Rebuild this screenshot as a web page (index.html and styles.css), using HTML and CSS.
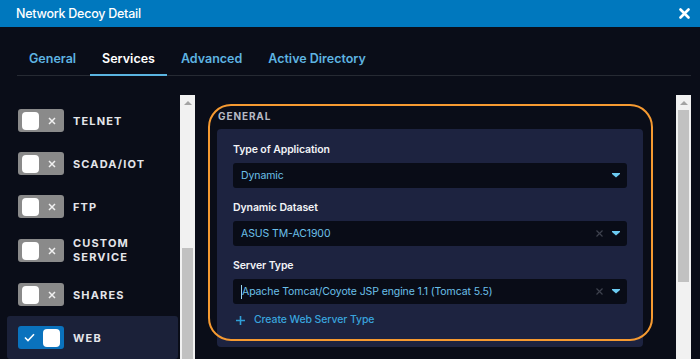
FILE: index.html
```html
<!DOCTYPE html>
<html lang="en">
  <head>
    <meta charset="UTF-8" />
    <meta name="viewport" content="width=device-width, initial-scale=1.0" />
    <title>Network Decoy Detail</title>
    <link rel="stylesheet" href="styles.css">
  </head>
  <body>
    <div id="dialog">
      <div id="titlebar">
        <span class="title">Network Decoy Detail</span>
        <span class="close">
          <svg width="11" height="11" viewBox="0 0 11 11"><path d="M1.5 1.5 L9.5 9.5 M9.5 1.5 L1.5 9.5" stroke="#fff" stroke-width="2.6" stroke-linecap="round"/></svg>
        </span>
      </div>

      <div id="tabs">
        <div class="tab">General</div>
        <div class="tab active">Services</div>
        <div class="tab">Advanced</div>
        <div class="tab">Active Directory</div>
      </div>

      <div id="content">
        <div id="services">
          <div class="service">
            <div class="toggle"><span class="knob"></span><svg class="mark" width="8" height="8" viewBox="0 0 8 8"><path d="M1 1 L7 7 M7 1 L1 7" stroke="#f0f0f0" stroke-width="1.5"/></svg></div>
            <div class="label">TELNET</div>
          </div>
          <div class="service">
            <div class="toggle"><span class="knob"></span><svg class="mark" width="8" height="8" viewBox="0 0 8 8"><path d="M1 1 L7 7 M7 1 L1 7" stroke="#f0f0f0" stroke-width="1.5"/></svg></div>
            <div class="label">SCADA/IOT</div>
          </div>
          <div class="service">
            <div class="toggle"><span class="knob"></span><svg class="mark" width="8" height="8" viewBox="0 0 8 8"><path d="M1 1 L7 7 M7 1 L1 7" stroke="#f0f0f0" stroke-width="1.5"/></svg></div>
            <div class="label">FTP</div>
          </div>
          <div class="service">
            <div class="toggle"><span class="knob"></span><svg class="mark" width="8" height="8" viewBox="0 0 8 8"><path d="M1 1 L7 7 M7 1 L1 7" stroke="#f0f0f0" stroke-width="1.5"/></svg></div>
            <div class="label two-line">CUSTOM<br>SERVICE</div>
          </div>
          <div class="service">
            <div class="toggle"><span class="knob"></span><svg class="mark" width="8" height="8" viewBox="0 0 8 8"><path d="M1 1 L7 7 M7 1 L1 7" stroke="#f0f0f0" stroke-width="1.5"/></svg></div>
            <div class="label">SHARES</div>
          </div>
          <div class="service selected">
            <div class="toggle on">
              <svg class="check" width="11" height="9" viewBox="0 0 11 9"><path d="M1 4.5 L4 7.5 L10 1.2" fill="none" stroke="#fff" stroke-width="1.6"/></svg>
              <span class="knob"></span>
            </div>
            <div class="label">WEB</div>
          </div>
        </div>

        <div class="scrollbar">
          <div class="arrow"></div>
          <div class="track" style="height: 138px"></div>
          <div class="thumb"></div>
        </div>

        <div id="detail">
          <div class="section-title">GENERAL</div>
          <div class="card">
            <div class="field-label">Type of Application</div>
            <div class="select">
              <span class="value">Dynamic</span>
              <svg class="caret" width="8" height="5" viewBox="0 0 8 5"><path d="M0 0 H8 V1 L4 4.5 L0 1 Z" fill="#6ccbf2"/></svg>
            </div>

            <div class="field-label">Dynamic Dataset</div>
            <div class="select">
              <span class="value">ASUS TM-AC1900</span>
              <svg class="clear" width="7" height="7" viewBox="0 0 7 7"><path d="M0.5 0.5 L6.5 6.5 M6.5 0.5 L0.5 6.5" stroke="#3d414d" stroke-width="1.2"/></svg>
              <svg class="caret" width="8" height="5" viewBox="0 0 8 5"><path d="M0 0 H8 V1 L4 4.5 L0 1 Z" fill="#6ccbf2"/></svg>
            </div>

            <div class="field-label">Server Type</div>
            <div class="select">
              <span class="value"><span class="cursor"></span>Apache Tomcat/Coyote JSP engine 1.1 (Tomcat 5.5)</span>
              <svg class="clear" width="7" height="7" viewBox="0 0 7 7"><path d="M0.5 0.5 L6.5 6.5 M6.5 0.5 L0.5 6.5" stroke="#3d414d" stroke-width="1.2"/></svg>
              <svg class="caret" width="8" height="5" viewBox="0 0 8 5"><path d="M0 0 H8 V1 L4 4.5 L0 1 Z" fill="#6ccbf2"/></svg>
            </div>

            <div class="create">
              <svg width="9" height="9" viewBox="0 0 9 9"><path d="M4.5 0 V9 M0 4.5 H9" stroke="#2f9fd8" stroke-width="1.6"/></svg>
              <span>Create Web Server Type</span>
            </div>
          </div>
        </div>

        <div class="scrollbar">
          <div class="arrow"></div>
          <div class="thumb" style="height: 172px; flex: none"></div>
          <div class="track"></div>
        </div>
      </div>

      <div class="highlight"></div>
    </div>
  </body>
</html>
```

FILE: styles.css
```css
  * {
    box-sizing: border-box;
  }
  body {
    margin: 0;
    background-color: #0a0d18;
    font-family: Inter, "Noto Sans", sans-serif;
  }
  #dialog {
    position: relative;
    width: 700px;
    height: 359px;
    overflow: hidden;
    background-color: #0a0d18;
  }
  #titlebar {
    height: 27px;
    background-color: #0078be;
    color: white;
    display: flex;
    align-items: center;
    justify-content: space-between;
    padding: 0 10px 0 16px;
  }
  .title {
    font-size: 12.5px;
    font-weight: 500;
    letter-spacing: -0.25px;
  }
  .close {
    display: flex;
    margin-top: -1px;
  }
  #tabs {
    display: flex;
    margin: 0 9px 0 17px;
    border-bottom: 1px solid #262a33;
  }
  .tab {
    padding: 24px 12px 7px 12px;
    margin-right: 2px;
    margin-bottom: -1px;
    line-height: 16px;
    font-size: 12.5px;
    font-weight: 600;
    color: #5eb4e2;
    border-bottom: 2px solid transparent;
  }
  .tab.active {
    color: #ffffff;
    border-bottom-color: #5ab4e0;
  }
  #content {
    display: flex;
    padding-top: 19px;
    margin-right: 9px;
    height: 283px;
  }
  #services {
    width: 180px;
    padding-top: 4px;
  }
  .service {
    display: flex;
    align-items: center;
    gap: 9px;
    height: 43px;
    margin: 0 2px 0 7px;
    padding-left: 11px;
    border-radius: 3px;
  }
  .service:nth-child(4) {
    height: 45px;
  }
  .service.selected {
    background-color: #1b2139;
  }
  .toggle {
    width: 46px;
    height: 23px;
    border-radius: 3px;
    background-color: #8a8a8a;
    display: flex;
    align-items: center;
    padding: 0 4px;
  }
  .knob {
    width: 17px;
    height: 18px;
    border-radius: 4px;
    background-color: #ffffff;
  }
  .mark {
    margin-left: 9px;
  }
  .toggle.on {
    background-color: #0a72bd;
    justify-content: space-between;
    padding: 0 4px 0 6px;
  }
  .label {
    color: #e4e5ea;
    font-size: 11px;
    font-weight: 700;
    letter-spacing: 1.15px;
    line-height: 12px;
  }
  .label.two-line {
    line-height: 13.5px;
  }
  .scrollbar {
    width: 15px;
    background-color: #f1f1f1;
    display: flex;
    flex-direction: column;
    align-items: center;
    padding: 0 2px;
  }
  .arrow {
    flex: none;
    width: 0;
    height: 0;
    margin: 6px 0 5px 0;
    border-left: 4px solid transparent;
    border-right: 4px solid transparent;
    border-bottom: 4px solid #a3a3a3;
  }
  .track {
    flex: none;
  }
  .thumb {
    flex: 1;
    width: 11px;
    background-color: #c1c1c1;
  }
  .scrollbar .track:last-child {
    flex: 1;
  }
  #detail {
    flex: 1;
    padding: 0 33px 0 22px;
  }
  .section-title {
    margin-top: 15px;
    padding-left: 1px;
    font-size: 10px;
    line-height: 12px;
    font-weight: 700;
    letter-spacing: 0.9px;
    color: #b7bac4;
  }
  .card {
    margin-top: 7px;
    background-color: #1d2340;
    border-radius: 4px;
    padding: 14px 16px 19px 16px;
  }
  .field-label {
    font-size: 10.5px;
    line-height: 14px;
    font-weight: 600;
    letter-spacing: -0.1px;
    color: #f2f3f6;
    margin-bottom: 6px;
  }
  .select {
    height: 25px;
    margin-bottom: 13px;
    background-color: #090c17;
    border-radius: 3px;
    display: flex;
    align-items: center;
    padding: 0 7px 0 8px;
  }
  .value {
    flex: 1;
    font-size: 10.5px;
    letter-spacing: -0.1px;
    color: #6cc0ea;
    display: flex;
    align-items: center;
  }
  .cursor {
    width: 1px;
    height: 14px;
    background-color: #9ad4f0;
  }
  .clear {
    margin-right: 9px;
  }
  .select:nth-child(6) {
    margin-bottom: 8px;
  }
  .create {
    display: flex;
    align-items: center;
    gap: 9px;
    padding-left: 3px;
    line-height: 16px;
    font-size: 10.5px;
    font-weight: 500;
    letter-spacing: -0.1px;
    color: #39a3dc;
  }
  .highlight {
    position: absolute;
    left: 208px;
    top: 104px;
    width: 445px;
    height: 237px;
    border: 2.5px solid #f69a31;
    border-radius: 23px;
  }
```
